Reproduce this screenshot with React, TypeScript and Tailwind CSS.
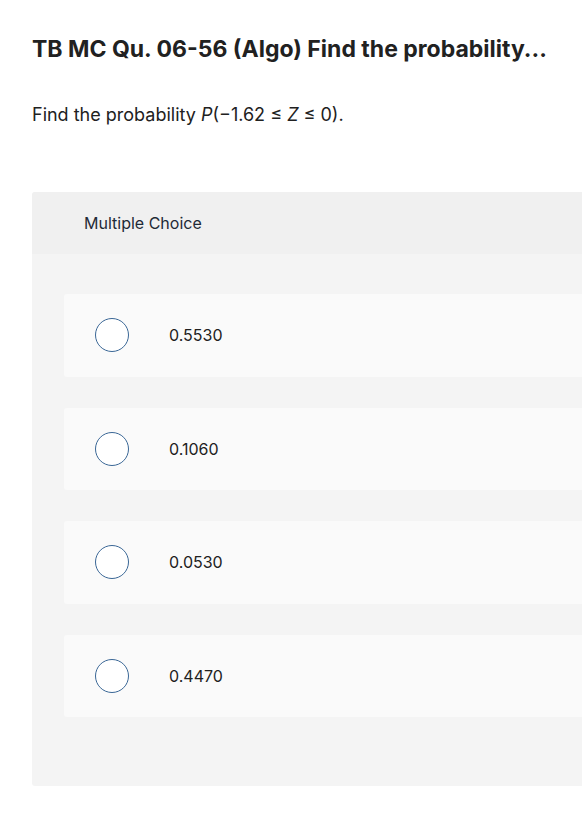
import React from 'react';

const choices = ['0.5530', '0.1060', '0.0530', '0.4470'];

export default function App() {
  return (
    <main
      className="min-h-screen bg-white overflow-hidden text-[#212121]"
      style={{ fontFamily: 'Inter, "Open Sans", "Liberation Sans", sans-serif' }}
    >
      <div className="pl-8 pt-[35px]">
        <h1 className="text-[23px] leading-[28px] font-bold">
          TB MC Qu. 06-56 (Algo) Find the probability...
        </h1>
        <p className="mt-[40px] text-[18px] leading-[24px]">
          Find the probability <i>P</i>(−1.62 ≤ <i>Z</i> ≤ 0).
        </p>

        {/* 選択肢カード */}
        <section className="mt-[65px] w-[600px] rounded-[3px] bg-[#f4f4f4]">
          <div className="h-[62px] flex items-center pl-[52px] bg-[#f0f0f0] rounded-t-[3px] text-[16px] text-[#1f2a37]">
            Multiple Choice
          </div>
          <div className="pl-8 pt-10 pb-[69px] flex flex-col gap-[31px]">
            {choices.map((c) => (
              <label
                key={c}
                className="h-[82.5px] flex items-center bg-[#fafafa] rounded-[3px] pl-[31px]"
              >
                <span className="w-[34px] h-[34px] rounded-full border-[1.5px] border-[#3a6796] bg-white shrink-0" />
                <span className="ml-[40px] text-[16px]">{c}</span>
              </label>
            ))}
          </div>
        </section>
      </div>
    </main>
  );
}
